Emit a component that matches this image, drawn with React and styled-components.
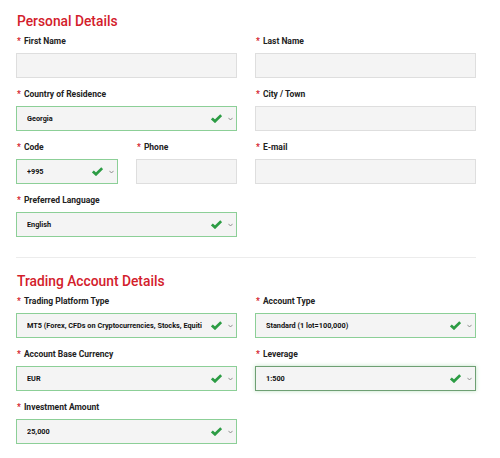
import React from "react";
import styled, { createGlobalStyle, css } from "styled-components";

const Global = createGlobalStyle`
  html, body { margin: 0; padding: 0; background: #fff; }
  body { font-family: Roboto, "Liberation Sans", Arial, sans-serif; color: #222; }
  * { box-sizing: border-box; }
`;

const Page = styled.div`
  width: 500px;
  padding: 11px 24px 16px 16px;
`;

const Section = styled.section`
  display: flex;
  flex-direction: column;
`;

const Heading = styled.h2`
  margin: 0 0 4px 1px;
  font-size: 13.8px;
  line-height: 20px;
  font-weight: 500;
  color: #d3202b;
`;

const Grid = styled.div`
  display: grid;
  grid-template-columns: 221px 221px;
  column-gap: 18px;
  row-gap: 10px;
`;

const SubGrid = styled.div`
  display: grid;
  grid-template-columns: 102px 101px;
  column-gap: 18px;
`;

const Field = styled.div`
  display: flex;
  flex-direction: column;
`;

const Label = styled.label`
  font-size: 8.5px;
  line-height: 12px;
  font-weight: 700;
  color: #222;
  margin: 0 0 6px 1px;
  white-space: nowrap;
`;

const Star = styled.span`
  color: #d3202b;
  margin-right: 3px;
`;

const Box = styled.div`
  height: 25px;
  display: flex;
  align-items: center;
  background: #f4f4f4;
  border: 1px solid #dedede;
  padding: 0 3px 0 10px;
  ${(p) =>
    p.$valid &&
    css`
      border-color: #8ccf97;
    `}
  ${(p) =>
    p.$focus &&
    css`
      border-color: #6e9f73;
      box-shadow: 0 0 4px rgba(110, 190, 120, 0.45);
    `}
`;

const Value = styled.span`
  flex: 1;
  min-width: 0;
  font-size: 7.3px;
  font-weight: 700;
  color: #111;
  white-space: nowrap;
  overflow: hidden;
`;

const Check = styled.svg`
  width: 11px;
  height: 9px;
  flex: none;
  margin-left: 9px;
`;

const Chevron = styled.svg`
  width: 5px;
  height: 4px;
  flex: none;
  margin-left: 6px;
`;

const Divider = styled.hr`
  border: none;
  border-top: 1px solid #ececec;
  margin: 20px 0 13px 0;
  width: 460px;
`;

const CheckIcon = () => (
  <Check viewBox="0 0 11 9">
    <path d="M0.9 4.4 L4 7.3 L10.2 1.2" fill="none" stroke="#2c9c44" strokeWidth="2.7" strokeLinejoin="miter" />
  </Check>
);

const ChevronIcon = () => (
  <Chevron viewBox="0 0 5 4">
    <path d="M0.4 0.8 L2.5 3 L4.6 0.8" fill="none" stroke="#777" strokeWidth="0.8" />
  </Chevron>
);

const Input = ({ value, focus }) => (
  <Box $valid={!!value} $focus={focus}>
    {value ? (
      <>
        <Value>{value}</Value>
        <CheckIcon />
        <ChevronIcon />
      </>
    ) : null}
  </Box>
);

const F = ({ label, value, focus }) => (
  <Field>
    <Label>
      <Star>*</Star>
      {label}
    </Label>
    <Input value={value} focus={focus} />
  </Field>
);

export default function App() {
  return (
    <Page>
      <Global />
      <Section>
        <Heading>Personal Details</Heading>
        <Grid>
          <F label="First Name" />
          <F label="Last Name" />
          <F label="Country of Residence" value="Georgia" />
          <F label="City / Town" />
          <SubGrid>
            <F label="Code" value="+995" />
            <F label="Phone" />
          </SubGrid>
          <F label="E-mail" />
          <F label="Preferred Language" value="English" />
        </Grid>
      </Section>
      <Divider />
      <Section>
        <Heading>Trading Account Details</Heading>
        <Grid>
          <F label="Trading Platform Type" value="MT5 (Forex, CFDs on Cryptocurrencies, Stocks, Equities, Indices, Commodities)" />
          <F label="Account Type" value="Standard (1 lot=100,000)" />
          <F label="Account Base Currency" value="EUR" />
          <F label="Leverage" value="1:500" focus />
          <F label="Investment Amount" value="25,000" />
        </Grid>
      </Section>
    </Page>
  );
}
